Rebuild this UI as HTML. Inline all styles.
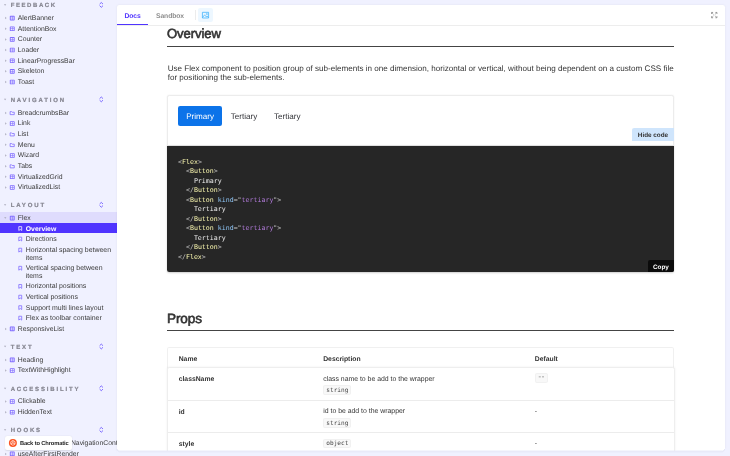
<!DOCTYPE html>
<html lang="en"><head><meta charset="utf-8"><title>Flex - Overview</title><style>
*{box-sizing:border-box;margin:0;padding:0}
html,body{width:730px;height:456px;overflow:hidden;background:#f0f1ff}
body{position:relative;font-family:"Liberation Sans",sans-serif;color:#333;text-rendering:geometricPrecision}
#root{position:absolute;left:-8px;top:-8px;width:746px;height:472px;background:#f0f1ff;will-change:transform;filter:blur(0.3px)}
#in{position:absolute;left:8px;top:8px;width:730px;height:456px}
.ic{position:absolute;display:block;overflow:visible}
#sb{position:absolute;left:0;top:0;width:116.6px;height:464px;overflow:hidden}
.sh,.si,.tab,.p,.bt,.hc,.th,.td,.pt,.bd,.cl{position:absolute;height:10px;line-height:10px;white-space:nowrap}
.sh{font-size:6.0px;font-weight:bold;letter-spacing:1.85px;color:#858590;-webkit-text-stroke:0.2px #858590}
.si{font-size:6.83px;color:#3a3a3a}
.si.sel{color:#fff;font-weight:bold;font-size:6.85px}
.si.st{font-size:6.95px}
#panel{position:absolute;left:116.6px;top:5.07px;width:608.4px;height:446.1px;background:#fff;border-radius:2.2px;box-shadow:0 0.5px 2.5px rgba(0,0,0,.07)}
#tabs{position:absolute;left:116.6px;top:24.7px;width:608.4px;height:0.7px;background:#ededed}
.tab{font-size:6.8px;font-weight:bold;letter-spacing:-0.1px}
.h2{position:absolute;font-size:13.3px;line-height:19px;height:19px;color:#333;white-space:nowrap;-webkit-text-stroke:0.6px #333;letter-spacing:-0.1px;transform:scaleX(0.985);transform-origin:0 0}
.hr{position:absolute;left:167.4px;width:506.6px;height:0.9px;background:#444}
.p{font-size:8.085px;color:#333}
#prev{position:absolute;left:167.4px;top:95.3px;width:506.8px;height:51px;background:#fff;border:0.6px solid #ececec;border-radius:2.2px 2.2px 0 0;box-shadow:0 0.5px 2px rgba(0,0,0,.07)}
#btn{position:absolute;left:177.8px;top:105.9px;width:44.2px;height:20px;border-radius:2.1px;background:#0c73e9}
.bt{font-size:8.1px;color:#323338}
#hide{position:absolute;left:632.1px;top:128.1px;width:41.8px;height:12.8px;background:#cfe5fc;border-radius:2.1px 0 0 0}
.hc{font-size:6.35px;font-weight:bold;color:#333}
#code{position:absolute;left:167.4px;top:146.2px;width:506.8px;height:125.9px;background:#262626;border-radius:0 0 2.2px 2.2px;box-shadow:0 0.5px 2px rgba(0,0,0,.2)}
.cl{font-family:"DejaVu Sans Mono","Liberation Mono",monospace;font-size:6.6px;line-height:9.55px;height:9.55px;color:#ededed;white-space:pre}
.w{color:#c2c2c2}.y{color:#fbf8b0}.b{color:#8ec4f4}.m{color:#b07ad8}
#copy{position:absolute;left:647.7px;top:260.3px;width:26.3px;height:11.8px;background:#0b0b0b;border-radius:2.1px 0 2.1px 0}
#thead{position:absolute;left:167.4px;top:346.9px;width:506.8px;height:24px;border:0.6px solid #f0f0f0;border-bottom:none;border-radius:2.2px 2.2px 0 0}
#tbody{position:absolute;left:167.4px;top:367px;width:507.2px;height:100px;background:#fff;border:0.6px solid #eeeeee;border-radius:2.2px;box-shadow:0 0.5px 2.5px rgba(0,0,0,.07)}
.sep{position:absolute;left:167.7px;width:506.2px;height:0.6px;background:#ececec}
.th{font-size:6.8px;font-weight:bold;color:#333}
.td{font-size:6.9px;color:#333}
.pill{position:absolute;height:9.5px;border:0.5px solid #f1f1f1;background:#f8f8f8;border-radius:1.6px}
.pt{font-family:"DejaVu Sans Mono","Liberation Mono",monospace;font-size:6.1px;color:#444}
#botmask{position:absolute;left:0;top:451.2px;width:730px;height:4.8px;background:#f0f1ff}
#badge{position:absolute;left:5.3px;top:436.1px;width:66.8px;height:14.1px;background:#fff;border-radius:2.1px;box-shadow:0 0.3px 1.5px rgba(0,0,0,.10)}
.bd{font-size:5.75px;font-weight:bold;color:#222;letter-spacing:-0.12px}
</style></head><body>
<div id="root"><div id="in">
<div style="position:absolute;left:-6px;top:212.2px;width:122.6px;height:10.5px;background:#dfdcfd"></div>
<div style="position:absolute;left:-6px;top:222.6px;width:122.6px;height:10.2px;background:#5034ff"></div>
<div id="sb">
<svg class="ic" style="left:2px;top:3px;width:6px;height:5px" viewBox="0 0 6 5"><g transform="translate(1.70 1.00) scale(0.4667 0.5000)"><path d="M0.5 0.5L5.5 0.5L3 3.5z" fill="#a9a9b9"/></g></svg>
<div class="sh" style="left:10.7px;top:1px;letter-spacing:1.58px">FEEDBACK</div>
<svg class="ic" style="left:98px;top:0px;width:7px;height:10px" viewBox="0 0 7 10"><g transform="translate(1.30 1.80) scale(0.5000 0.4429)"><path fill="none" stroke="#6d58ff" stroke-width="1.9" stroke-linecap="round" stroke-linejoin="round" d="M1.2 4.6L4 1.6l2.8 3M1.2 9.4L4 12.4l2.8-3"/></g></svg>
<svg class="ic" style="left:3px;top:15px;width:6px;height:6px" viewBox="0 0 6 6"><g transform="translate(1.80 1.60) scale(0.5500 0.5000)"><path d="M0.5 0.5L3.5 3L0.5 5.5z" fill="#b4b4c4"/></g></svg>
<svg class="ic" style="left:8px;top:14px;width:8px;height:8px" viewBox="0 0 8 8"><g transform="translate(1.80 1.80) scale(0.3500 0.3286)"><path fill="#806cff" fill-rule="evenodd" d="M2 0h10a2 2 0 0 1 2 2v10a2 2 0 0 1-2 2H2a2 2 0 0 1-2-2V2a2 2 0 0 1 2-2zm0.6 2.6v3.6h3.6V2.6zm5.2 0v3.6h3.6V2.6zM2.6 7.8v3.6h3.6V7.8zm5.2 0v3.6h3.6V7.8z"/></g></svg>
<div class="si" style="left:17.8px;top:14px">AlertBanner</div>
<svg class="ic" style="left:3px;top:26px;width:6px;height:6px" viewBox="0 0 6 6"><g transform="translate(1.80 1.25) scale(0.5500 0.5000)"><path d="M0.5 0.5L3.5 3L0.5 5.5z" fill="#b4b4c4"/></g></svg>
<svg class="ic" style="left:8px;top:25px;width:8px;height:8px" viewBox="0 0 8 8"><g transform="translate(1.80 1.45) scale(0.3500 0.3286)"><path fill="#806cff" fill-rule="evenodd" d="M2 0h10a2 2 0 0 1 2 2v10a2 2 0 0 1-2 2H2a2 2 0 0 1-2-2V2a2 2 0 0 1 2-2zm0.6 2.6v3.6h3.6V2.6zm5.2 0v3.6h3.6V2.6zM2.6 7.8v3.6h3.6V7.8zm5.2 0v3.6h3.6V7.8z"/></g></svg>
<div class="si" style="left:17.8px;top:25px">AttentionBox</div>
<svg class="ic" style="left:3px;top:36px;width:6px;height:6px" viewBox="0 0 6 6"><g transform="translate(1.80 1.90) scale(0.5500 0.5000)"><path d="M0.5 0.5L3.5 3L0.5 5.5z" fill="#b4b4c4"/></g></svg>
<svg class="ic" style="left:8px;top:36px;width:8px;height:8px" viewBox="0 0 8 8"><g transform="translate(1.80 1.10) scale(0.3500 0.3286)"><path fill="#806cff" fill-rule="evenodd" d="M2 0h10a2 2 0 0 1 2 2v10a2 2 0 0 1-2 2H2a2 2 0 0 1-2-2V2a2 2 0 0 1 2-2zm0.6 2.6v3.6h3.6V2.6zm5.2 0v3.6h3.6V2.6zM2.6 7.8v3.6h3.6V7.8zm5.2 0v3.6h3.6V7.8z"/></g></svg>
<div class="si" style="left:17.8px;top:35px">Counter</div>
<svg class="ic" style="left:3px;top:47px;width:6px;height:6px" viewBox="0 0 6 6"><g transform="translate(1.80 1.55) scale(0.5500 0.5000)"><path d="M0.5 0.5L3.5 3L0.5 5.5z" fill="#b4b4c4"/></g></svg>
<svg class="ic" style="left:8px;top:46px;width:8px;height:8px" viewBox="0 0 8 8"><g transform="translate(1.80 1.75) scale(0.3500 0.3286)"><path fill="#806cff" fill-rule="evenodd" d="M2 0h10a2 2 0 0 1 2 2v10a2 2 0 0 1-2 2H2a2 2 0 0 1-2-2V2a2 2 0 0 1 2-2zm0.6 2.6v3.6h3.6V2.6zm5.2 0v3.6h3.6V2.6zM2.6 7.8v3.6h3.6V7.8zm5.2 0v3.6h3.6V7.8z"/></g></svg>
<div class="si" style="left:17.8px;top:46px">Loader</div>
<svg class="ic" style="left:3px;top:58px;width:6px;height:6px" viewBox="0 0 6 6"><g transform="translate(1.80 1.20) scale(0.5500 0.5000)"><path d="M0.5 0.5L3.5 3L0.5 5.5z" fill="#b4b4c4"/></g></svg>
<svg class="ic" style="left:8px;top:57px;width:8px;height:8px" viewBox="0 0 8 8"><g transform="translate(1.80 1.40) scale(0.3500 0.3286)"><path fill="#806cff" fill-rule="evenodd" d="M2 0h10a2 2 0 0 1 2 2v10a2 2 0 0 1-2 2H2a2 2 0 0 1-2-2V2a2 2 0 0 1 2-2zm0.6 2.6v3.6h3.6V2.6zm5.2 0v3.6h3.6V2.6zM2.6 7.8v3.6h3.6V7.8zm5.2 0v3.6h3.6V7.8z"/></g></svg>
<div class="si" style="left:17.8px;top:57px">LinearProgressBar</div>
<svg class="ic" style="left:3px;top:68px;width:6px;height:6px" viewBox="0 0 6 6"><g transform="translate(1.80 1.85) scale(0.5500 0.5000)"><path d="M0.5 0.5L3.5 3L0.5 5.5z" fill="#b4b4c4"/></g></svg>
<svg class="ic" style="left:8px;top:68px;width:8px;height:8px" viewBox="0 0 8 8"><g transform="translate(1.80 1.05) scale(0.3500 0.3286)"><path fill="#806cff" fill-rule="evenodd" d="M2 0h10a2 2 0 0 1 2 2v10a2 2 0 0 1-2 2H2a2 2 0 0 1-2-2V2a2 2 0 0 1 2-2zm0.6 2.6v3.6h3.6V2.6zm5.2 0v3.6h3.6V2.6zM2.6 7.8v3.6h3.6V7.8zm5.2 0v3.6h3.6V7.8z"/></g></svg>
<div class="si" style="left:17.8px;top:67px">Skeleton</div>
<svg class="ic" style="left:3px;top:79px;width:6px;height:6px" viewBox="0 0 6 6"><g transform="translate(1.80 1.50) scale(0.5500 0.5000)"><path d="M0.5 0.5L3.5 3L0.5 5.5z" fill="#b4b4c4"/></g></svg>
<svg class="ic" style="left:8px;top:78px;width:8px;height:8px" viewBox="0 0 8 8"><g transform="translate(1.80 1.70) scale(0.3500 0.3286)"><path fill="#806cff" fill-rule="evenodd" d="M2 0h10a2 2 0 0 1 2 2v10a2 2 0 0 1-2 2H2a2 2 0 0 1-2-2V2a2 2 0 0 1 2-2zm0.6 2.6v3.6h3.6V2.6zm5.2 0v3.6h3.6V2.6zM2.6 7.8v3.6h3.6V7.8zm5.2 0v3.6h3.6V7.8z"/></g></svg>
<div class="si" style="left:17.8px;top:78px">Toast</div>
<svg class="ic" style="left:2px;top:97px;width:6px;height:5px" viewBox="0 0 6 5"><g transform="translate(1.70 1.50) scale(0.4667 0.5000)"><path d="M0.5 0.5L5.5 0.5L3 3.5z" fill="#a9a9b9"/></g></svg>
<div class="sh" style="left:10.7px;top:96px">NAVIGATION</div>
<svg class="ic" style="left:98px;top:95px;width:7px;height:10px" viewBox="0 0 7 10"><g transform="translate(1.30 1.30) scale(0.5000 0.4429)"><path fill="none" stroke="#6d58ff" stroke-width="1.9" stroke-linecap="round" stroke-linejoin="round" d="M1.2 4.6L4 1.6l2.8 3M1.2 9.4L4 12.4l2.8-3"/></g></svg>
<svg class="ic" style="left:3px;top:110px;width:6px;height:6px" viewBox="0 0 6 6"><g transform="translate(1.80 1.40) scale(0.5500 0.5000)"><path d="M0.5 0.5L3.5 3L0.5 5.5z" fill="#b4b4c4"/></g></svg>
<svg class="ic" style="left:8px;top:110px;width:8px;height:7px" viewBox="0 0 8 7"><g transform="translate(1.70 1.10) scale(0.3571 0.3636)"><path fill="none" stroke="#806cff" stroke-width="2.2" stroke-linejoin="round" d="M1.2 1.3h4l1.6 1.8h6v6.6H1.2z"/></g></svg>
<div class="si" style="left:17.8px;top:109px">BreadcrumbsBar</div>
<svg class="ic" style="left:3px;top:121px;width:6px;height:6px" viewBox="0 0 6 6"><g transform="translate(1.80 1.05) scale(0.5500 0.5000)"><path d="M0.5 0.5L3.5 3L0.5 5.5z" fill="#b4b4c4"/></g></svg>
<svg class="ic" style="left:8px;top:120px;width:8px;height:8px" viewBox="0 0 8 8"><g transform="translate(1.80 1.25) scale(0.3500 0.3286)"><path fill="#806cff" fill-rule="evenodd" d="M2 0h10a2 2 0 0 1 2 2v10a2 2 0 0 1-2 2H2a2 2 0 0 1-2-2V2a2 2 0 0 1 2-2zm0.6 2.6v3.6h3.6V2.6zm5.2 0v3.6h3.6V2.6zM2.6 7.8v3.6h3.6V7.8zm5.2 0v3.6h3.6V7.8z"/></g></svg>
<div class="si" style="left:17.8px;top:119px">Link</div>
<svg class="ic" style="left:3px;top:131px;width:6px;height:6px" viewBox="0 0 6 6"><g transform="translate(1.80 1.70) scale(0.5500 0.5000)"><path d="M0.5 0.5L3.5 3L0.5 5.5z" fill="#b4b4c4"/></g></svg>
<svg class="ic" style="left:8px;top:131px;width:8px;height:7px" viewBox="0 0 8 7"><g transform="translate(1.70 1.40) scale(0.3571 0.3636)"><path fill="none" stroke="#806cff" stroke-width="2.2" stroke-linejoin="round" d="M1.2 1.3h4l1.6 1.8h6v6.6H1.2z"/></g></svg>
<div class="si" style="left:17.8px;top:130px">List</div>
<svg class="ic" style="left:3px;top:142px;width:6px;height:6px" viewBox="0 0 6 6"><g transform="translate(1.80 1.35) scale(0.5500 0.5000)"><path d="M0.5 0.5L3.5 3L0.5 5.5z" fill="#b4b4c4"/></g></svg>
<svg class="ic" style="left:8px;top:142px;width:8px;height:7px" viewBox="0 0 8 7"><g transform="translate(1.70 1.05) scale(0.3571 0.3636)"><path fill="none" stroke="#806cff" stroke-width="2.2" stroke-linejoin="round" d="M1.2 1.3h4l1.6 1.8h6v6.6H1.2z"/></g></svg>
<div class="si" style="left:17.8px;top:141px">Menu</div>
<svg class="ic" style="left:3px;top:153px;width:6px;height:6px" viewBox="0 0 6 6"><g transform="translate(1.80 1.00) scale(0.5500 0.5000)"><path d="M0.5 0.5L3.5 3L0.5 5.5z" fill="#b4b4c4"/></g></svg>
<svg class="ic" style="left:8px;top:152px;width:8px;height:8px" viewBox="0 0 8 8"><g transform="translate(1.80 1.20) scale(0.3500 0.3286)"><path fill="#806cff" fill-rule="evenodd" d="M2 0h10a2 2 0 0 1 2 2v10a2 2 0 0 1-2 2H2a2 2 0 0 1-2-2V2a2 2 0 0 1 2-2zm0.6 2.6v3.6h3.6V2.6zm5.2 0v3.6h3.6V2.6zM2.6 7.8v3.6h3.6V7.8zm5.2 0v3.6h3.6V7.8z"/></g></svg>
<div class="si" style="left:17.8px;top:151px">Wizard</div>
<svg class="ic" style="left:3px;top:163px;width:6px;height:6px" viewBox="0 0 6 6"><g transform="translate(1.80 1.65) scale(0.5500 0.5000)"><path d="M0.5 0.5L3.5 3L0.5 5.5z" fill="#b4b4c4"/></g></svg>
<svg class="ic" style="left:8px;top:163px;width:8px;height:7px" viewBox="0 0 8 7"><g transform="translate(1.70 1.35) scale(0.3571 0.3636)"><path fill="none" stroke="#806cff" stroke-width="2.2" stroke-linejoin="round" d="M1.2 1.3h4l1.6 1.8h6v6.6H1.2z"/></g></svg>
<div class="si" style="left:17.8px;top:162px">Tabs</div>
<svg class="ic" style="left:3px;top:174px;width:6px;height:6px" viewBox="0 0 6 6"><g transform="translate(1.80 1.30) scale(0.5500 0.5000)"><path d="M0.5 0.5L3.5 3L0.5 5.5z" fill="#b4b4c4"/></g></svg>
<svg class="ic" style="left:8px;top:173px;width:8px;height:8px" viewBox="0 0 8 8"><g transform="translate(1.80 1.50) scale(0.3500 0.3286)"><path fill="#806cff" fill-rule="evenodd" d="M2 0h10a2 2 0 0 1 2 2v10a2 2 0 0 1-2 2H2a2 2 0 0 1-2-2V2a2 2 0 0 1 2-2zm0.6 2.6v3.6h3.6V2.6zm5.2 0v3.6h3.6V2.6zM2.6 7.8v3.6h3.6V7.8zm5.2 0v3.6h3.6V7.8z"/></g></svg>
<div class="si" style="left:17.8px;top:173px">VirtualizedGrid</div>
<svg class="ic" style="left:3px;top:184px;width:6px;height:6px" viewBox="0 0 6 6"><g transform="translate(1.80 1.95) scale(0.5500 0.5000)"><path d="M0.5 0.5L3.5 3L0.5 5.5z" fill="#b4b4c4"/></g></svg>
<svg class="ic" style="left:8px;top:184px;width:8px;height:8px" viewBox="0 0 8 8"><g transform="translate(1.80 1.15) scale(0.3500 0.3286)"><path fill="#806cff" fill-rule="evenodd" d="M2 0h10a2 2 0 0 1 2 2v10a2 2 0 0 1-2 2H2a2 2 0 0 1-2-2V2a2 2 0 0 1 2-2zm0.6 2.6v3.6h3.6V2.6zm5.2 0v3.6h3.6V2.6zM2.6 7.8v3.6h3.6V7.8zm5.2 0v3.6h3.6V7.8z"/></g></svg>
<div class="si" style="left:17.8px;top:183px">VirtualizedList</div>
<svg class="ic" style="left:2px;top:202px;width:6px;height:5px" viewBox="0 0 6 5"><g transform="translate(1.70 1.90) scale(0.4667 0.5000)"><path d="M0.5 0.5L5.5 0.5L3 3.5z" fill="#a9a9b9"/></g></svg>
<div class="sh" style="left:10.7px;top:201px">LAYOUT</div>
<svg class="ic" style="left:98px;top:200px;width:7px;height:10px" viewBox="0 0 7 10"><g transform="translate(1.30 1.70) scale(0.5000 0.4429)"><path fill="none" stroke="#6d58ff" stroke-width="1.9" stroke-linecap="round" stroke-linejoin="round" d="M1.2 4.6L4 1.6l2.8 3M1.2 9.4L4 12.4l2.8-3"/></g></svg>
<svg class="ic" style="left:2px;top:216px;width:6px;height:5px" viewBox="0 0 6 5"><g transform="translate(1.90 1.10) scale(0.4667 0.5000)"><path d="M0.5 0.5L5.5 0.5L3 3.5z" fill="#a9a9b9"/></g></svg>
<svg class="ic" style="left:8px;top:214px;width:8px;height:8px" viewBox="0 0 8 8"><g transform="translate(1.80 1.80) scale(0.3500 0.3286)"><path fill="#806cff" fill-rule="evenodd" d="M2 0h10a2 2 0 0 1 2 2v10a2 2 0 0 1-2 2H2a2 2 0 0 1-2-2V2a2 2 0 0 1 2-2zm0.6 2.6v3.6h3.6V2.6zm5.2 0v3.6h3.6V2.6zM2.6 7.8v3.6h3.6V7.8zm5.2 0v3.6h3.6V7.8z"/></g></svg>
<div class="si" style="left:17.8px;top:214px">Flex</div>
<svg class="ic" style="left:17px;top:225px;width:7px;height:8px" viewBox="0 0 7 8"><g transform="translate(1.30 1.15) scale(0.3900 0.3769)"><path fill="none" stroke="#f1eeff" stroke-width="2.1" stroke-linejoin="round" d="M1.3 1.3h7.4v10.2L5 8.6l-3.7 2.9z"/></g></svg>
<div class="si sel" style="left:25.8px;top:225px">Overview</div>
<svg class="ic" style="left:17px;top:235px;width:7px;height:8px" viewBox="0 0 7 8"><g transform="translate(1.30 1.65) scale(0.3900 0.3769)"><path fill="none" stroke="#806cff" stroke-width="2.1" stroke-linejoin="round" d="M1.3 1.3h7.4v10.2L5 8.6l-3.7 2.9z"/></g></svg>
<div class="si st" style="left:25.8px;top:235px">Directions</div>
<svg class="ic" style="left:17px;top:246px;width:7px;height:8px" viewBox="0 0 7 8"><g transform="translate(1.30 1.75) scale(0.3900 0.3769)"><path fill="none" stroke="#806cff" stroke-width="2.1" stroke-linejoin="round" d="M1.3 1.3h7.4v10.2L5 8.6l-3.7 2.9z"/></g></svg>
<div class="si st" style="left:25.8px;top:246px">Horizontal spacing between</div>
<div class="si st" style="left:25.8px;top:254px">items</div>
<svg class="ic" style="left:17px;top:264px;width:7px;height:8px" viewBox="0 0 7 8"><g transform="translate(1.30 1.85) scale(0.3900 0.3769)"><path fill="none" stroke="#806cff" stroke-width="2.1" stroke-linejoin="round" d="M1.3 1.3h7.4v10.2L5 8.6l-3.7 2.9z"/></g></svg>
<div class="si st" style="left:25.8px;top:264px">Vertical spacing between</div>
<div class="si st" style="left:25.8px;top:272px">items</div>
<svg class="ic" style="left:17px;top:283px;width:7px;height:8px" viewBox="0 0 7 8"><g transform="translate(1.30 1.05) scale(0.3900 0.3769)"><path fill="none" stroke="#806cff" stroke-width="2.1" stroke-linejoin="round" d="M1.3 1.3h7.4v10.2L5 8.6l-3.7 2.9z"/></g></svg>
<div class="si st" style="left:25.8px;top:282px">Horizontal positions</div>
<svg class="ic" style="left:17px;top:293px;width:7px;height:8px" viewBox="0 0 7 8"><g transform="translate(1.30 1.75) scale(0.3900 0.3769)"><path fill="none" stroke="#806cff" stroke-width="2.1" stroke-linejoin="round" d="M1.3 1.3h7.4v10.2L5 8.6l-3.7 2.9z"/></g></svg>
<div class="si st" style="left:25.8px;top:293px">Vertical positions</div>
<svg class="ic" style="left:17px;top:304px;width:7px;height:8px" viewBox="0 0 7 8"><g transform="translate(1.30 1.25) scale(0.3900 0.3769)"><path fill="none" stroke="#806cff" stroke-width="2.1" stroke-linejoin="round" d="M1.3 1.3h7.4v10.2L5 8.6l-3.7 2.9z"/></g></svg>
<div class="si st" style="left:25.8px;top:304px">Support multi lines layout</div>
<svg class="ic" style="left:17px;top:314px;width:7px;height:8px" viewBox="0 0 7 8"><g transform="translate(1.30 1.75) scale(0.3900 0.3769)"><path fill="none" stroke="#806cff" stroke-width="2.1" stroke-linejoin="round" d="M1.3 1.3h7.4v10.2L5 8.6l-3.7 2.9z"/></g></svg>
<div class="si st" style="left:25.8px;top:314px">Flex as toolbar container</div>
<svg class="ic" style="left:3px;top:326px;width:6px;height:6px" viewBox="0 0 6 6"><g transform="translate(1.80 1.40) scale(0.5500 0.5000)"><path d="M0.5 0.5L3.5 3L0.5 5.5z" fill="#b4b4c4"/></g></svg>
<svg class="ic" style="left:8px;top:325px;width:8px;height:8px" viewBox="0 0 8 8"><g transform="translate(1.80 1.60) scale(0.3500 0.3286)"><path fill="#806cff" fill-rule="evenodd" d="M2 0h10a2 2 0 0 1 2 2v10a2 2 0 0 1-2 2H2a2 2 0 0 1-2-2V2a2 2 0 0 1 2-2zm0.6 2.6v3.6h3.6V2.6zm5.2 0v3.6h3.6V2.6zM2.6 7.8v3.6h3.6V7.8zm5.2 0v3.6h3.6V7.8z"/></g></svg>
<div class="si" style="left:17.8px;top:325px">ResponsiveList</div>
<svg class="ic" style="left:2px;top:344px;width:6px;height:5px" viewBox="0 0 6 5"><g transform="translate(1.70 1.60) scale(0.4667 0.5000)"><path d="M0.5 0.5L5.5 0.5L3 3.5z" fill="#a9a9b9"/></g></svg>
<div class="sh" style="left:10.7px;top:343px">TEXT</div>
<svg class="ic" style="left:98px;top:342px;width:7px;height:10px" viewBox="0 0 7 10"><g transform="translate(1.30 1.40) scale(0.5000 0.4429)"><path fill="none" stroke="#6d58ff" stroke-width="1.9" stroke-linecap="round" stroke-linejoin="round" d="M1.2 4.6L4 1.6l2.8 3M1.2 9.4L4 12.4l2.8-3"/></g></svg>
<svg class="ic" style="left:3px;top:357px;width:6px;height:6px" viewBox="0 0 6 6"><g transform="translate(1.80 1.40) scale(0.5500 0.5000)"><path d="M0.5 0.5L3.5 3L0.5 5.5z" fill="#b4b4c4"/></g></svg>
<svg class="ic" style="left:8px;top:356px;width:8px;height:8px" viewBox="0 0 8 8"><g transform="translate(1.80 1.60) scale(0.3500 0.3286)"><path fill="#806cff" fill-rule="evenodd" d="M2 0h10a2 2 0 0 1 2 2v10a2 2 0 0 1-2 2H2a2 2 0 0 1-2-2V2a2 2 0 0 1 2-2zm0.6 2.6v3.6h3.6V2.6zm5.2 0v3.6h3.6V2.6zM2.6 7.8v3.6h3.6V7.8zm5.2 0v3.6h3.6V7.8z"/></g></svg>
<div class="si" style="left:17.8px;top:356px">Heading</div>
<svg class="ic" style="left:3px;top:368px;width:6px;height:6px" viewBox="0 0 6 6"><g transform="translate(1.80 1.00) scale(0.5500 0.5000)"><path d="M0.5 0.5L3.5 3L0.5 5.5z" fill="#b4b4c4"/></g></svg>
<svg class="ic" style="left:8px;top:367px;width:8px;height:8px" viewBox="0 0 8 8"><g transform="translate(1.80 1.20) scale(0.3500 0.3286)"><path fill="#806cff" fill-rule="evenodd" d="M2 0h10a2 2 0 0 1 2 2v10a2 2 0 0 1-2 2H2a2 2 0 0 1-2-2V2a2 2 0 0 1 2-2zm0.6 2.6v3.6h3.6V2.6zm5.2 0v3.6h3.6V2.6zM2.6 7.8v3.6h3.6V7.8zm5.2 0v3.6h3.6V7.8z"/></g></svg>
<div class="si" style="left:17.8px;top:366px">TextWithHighlight</div>
<svg class="ic" style="left:2px;top:386px;width:6px;height:5px" viewBox="0 0 6 5"><g transform="translate(1.70 1.40) scale(0.4667 0.5000)"><path d="M0.5 0.5L5.5 0.5L3 3.5z" fill="#a9a9b9"/></g></svg>
<div class="sh" style="left:10.7px;top:385px">ACCESSIBILITY</div>
<svg class="ic" style="left:98px;top:384px;width:7px;height:10px" viewBox="0 0 7 10"><g transform="translate(1.30 1.20) scale(0.5000 0.4429)"><path fill="none" stroke="#6d58ff" stroke-width="1.9" stroke-linecap="round" stroke-linejoin="round" d="M1.2 4.6L4 1.6l2.8 3M1.2 9.4L4 12.4l2.8-3"/></g></svg>
<svg class="ic" style="left:3px;top:399px;width:6px;height:6px" viewBox="0 0 6 6"><g transform="translate(1.80 1.00) scale(0.5500 0.5000)"><path d="M0.5 0.5L3.5 3L0.5 5.5z" fill="#b4b4c4"/></g></svg>
<svg class="ic" style="left:8px;top:398px;width:8px;height:8px" viewBox="0 0 8 8"><g transform="translate(1.80 1.20) scale(0.3500 0.3286)"><path fill="#806cff" fill-rule="evenodd" d="M2 0h10a2 2 0 0 1 2 2v10a2 2 0 0 1-2 2H2a2 2 0 0 1-2-2V2a2 2 0 0 1 2-2zm0.6 2.6v3.6h3.6V2.6zm5.2 0v3.6h3.6V2.6zM2.6 7.8v3.6h3.6V7.8zm5.2 0v3.6h3.6V7.8z"/></g></svg>
<div class="si" style="left:17.8px;top:397px">Clickable</div>
<svg class="ic" style="left:3px;top:409px;width:6px;height:6px" viewBox="0 0 6 6"><g transform="translate(1.80 1.70) scale(0.5500 0.5000)"><path d="M0.5 0.5L3.5 3L0.5 5.5z" fill="#b4b4c4"/></g></svg>
<svg class="ic" style="left:8px;top:408px;width:8px;height:8px" viewBox="0 0 8 8"><g transform="translate(1.80 1.90) scale(0.3500 0.3286)"><path fill="#806cff" fill-rule="evenodd" d="M2 0h10a2 2 0 0 1 2 2v10a2 2 0 0 1-2 2H2a2 2 0 0 1-2-2V2a2 2 0 0 1 2-2zm0.6 2.6v3.6h3.6V2.6zm5.2 0v3.6h3.6V2.6zM2.6 7.8v3.6h3.6V7.8zm5.2 0v3.6h3.6V7.8z"/></g></svg>
<div class="si" style="left:17.8px;top:408px">HiddenText</div>
<svg class="ic" style="left:2px;top:427px;width:6px;height:5px" viewBox="0 0 6 5"><g transform="translate(1.70 1.90) scale(0.4667 0.5000)"><path d="M0.5 0.5L5.5 0.5L3 3.5z" fill="#a9a9b9"/></g></svg>
<div class="sh" style="left:10.7px;top:426px">HOOKS</div>
<svg class="ic" style="left:98px;top:425px;width:7px;height:10px" viewBox="0 0 7 10"><g transform="translate(1.30 1.70) scale(0.5000 0.4429)"><path fill="none" stroke="#6d58ff" stroke-width="1.9" stroke-linecap="round" stroke-linejoin="round" d="M1.2 4.6L4 1.6l2.8 3M1.2 9.4L4 12.4l2.8-3"/></g></svg>
<svg class="ic" style="left:3px;top:440px;width:6px;height:6px" viewBox="0 0 6 6"><g transform="translate(1.80 1.70) scale(0.5500 0.5000)"><path d="M0.5 0.5L3.5 3L0.5 5.5z" fill="#b4b4c4"/></g></svg>
<svg class="ic" style="left:8px;top:439px;width:8px;height:8px" viewBox="0 0 8 8"><g transform="translate(1.80 1.90) scale(0.3500 0.3286)"><path fill="#806cff" fill-rule="evenodd" d="M2 0h10a2 2 0 0 1 2 2v10a2 2 0 0 1-2 2H2a2 2 0 0 1-2-2V2a2 2 0 0 1 2-2zm0.6 2.6v3.6h3.6V2.6zm5.2 0v3.6h3.6V2.6zM2.6 7.8v3.6h3.6V7.8zm5.2 0v3.6h3.6V7.8z"/></g></svg>
<div class="si" style="left:17.8px;top:439px">useGridKeyboardNavigationContext</div>
<svg class="ic" style="left:3px;top:451px;width:6px;height:6px" viewBox="0 0 6 6"><g transform="translate(1.80 1.40) scale(0.5500 0.5000)"><path d="M0.5 0.5L3.5 3L0.5 5.5z" fill="#b4b4c4"/></g></svg>
<svg class="ic" style="left:8px;top:450px;width:8px;height:8px" viewBox="0 0 8 8"><g transform="translate(1.80 1.60) scale(0.3500 0.3286)"><path fill="#806cff" fill-rule="evenodd" d="M2 0h10a2 2 0 0 1 2 2v10a2 2 0 0 1-2 2H2a2 2 0 0 1-2-2V2a2 2 0 0 1 2-2zm0.6 2.6v3.6h3.6V2.6zm5.2 0v3.6h3.6V2.6zM2.6 7.8v3.6h3.6V7.8zm5.2 0v3.6h3.6V7.8z"/></g></svg>
<div class="si" style="left:17.8px;top:450px">useAfterFirstRender</div>
</div>
<div id="panel"></div>
<div id="tabs"></div>
<div class="tab" style="left:124.5px;top:12px;color:#5034ff">Docs</div>
<div style="position:absolute;left:116.6px;top:23.6px;width:31.5px;height:1.5px;background:#5034ff"></div>
<div class="tab" style="left:156.0px;top:12px;color:#8f8f8f">Sandbox</div>
<div style="position:absolute;left:195.0px;top:10.0px;width:0.6px;height:10.1px;background:#ececec"></div>
<div style="position:absolute;left:198.4px;top:8.0px;width:14.3px;height:14.0px;background:#edf7ff;border-radius:2.1px"></div>
<svg class="ic" style="left:200px;top:10px;width:11px;height:10px" viewBox="0 0 11 10"><g transform="translate(1.90 1.80) scale(0.5143 0.5154)"><path fill="none" stroke="#3fb2fc" stroke-width="1.5" stroke-linejoin="round" d="M1 1h12v11H1z"/><circle cx="9.6" cy="4.4" r="1.3" fill="none" stroke="#3fb2fc" stroke-width="1.1"/><path fill="none" stroke="#3fb2fc" stroke-width="1.4" stroke-linejoin="round" d="M1.3 11.2L5.2 5.8l3.2 4 1.7-1.6 2.6 3"/></g></svg>
<svg class="ic" style="left:710px;top:11px;width:10px;height:10px" viewBox="0 0 10 10"><g transform="translate(1.10 1.00) scale(0.4500 0.4429)"><path fill="none" stroke="#868686" stroke-width="1.9" d="M1 4.4V1h3.4M9.6 1H13v3.4M13 9.6V13H9.600M4.400 13H1V9.600"/><path fill="none" stroke="#939393" stroke-width="1.5" d="M1.300 1.300l4.400 4.400M12.700 1.300L8.300 5.700M12.700 12.700L8.300 8.300M1.300 12.700l4.400-4.400"/></g></svg>
<div class="h2" style="left:167.4px;top:24px">Overview</div>
<div class="hr" style="top:45.9px"></div>
<div class="p" style="left:167.7px;top:64px">Use Flex component to position group of sub-elements in one dimension, horizontal or vertical, without being dependent on a custom CSS file</div>
<div class="p" style="left:167.7px;top:73px">for positioning the sub-elements.</div>
<div id="prev"></div>
<div id="btn"></div>
<div class="bt" style="left:186.2px;top:112px;color:#fff">Primary</div>
<div class="bt" style="left:230.7px;top:112px">Tertiary</div>
<div class="bt" style="left:274.0px;top:112px">Tertiary</div>
<div id="hide"></div>
<div class="hc" style="left:637.8px;top:131px">Hide code</div>
<div id="code">
</div>
<div class="cl" style="left:178.0px;top:158px"><span class="w">&lt;</span><span class="y">Flex</span><span class="w">&gt;</span></div>
<div class="cl" style="left:178.0px;top:167px">  <span class="w">&lt;</span><span class="y">Button</span><span class="w">&gt;</span></div>
<div class="cl" style="left:178.0px;top:177px">    Primary</div>
<div class="cl" style="left:178.0px;top:186px">  <span class="w">&lt;/</span><span class="y">Button</span><span class="w">&gt;</span></div>
<div class="cl" style="left:178.0px;top:196px">  <span class="w">&lt;</span><span class="y">Button</span> <span class="b">kind</span><span class="w">=&quot;</span><span class="m">tertiary</span><span class="w">&quot;&gt;</span></div>
<div class="cl" style="left:178.0px;top:205px">    Tertiary</div>
<div class="cl" style="left:178.0px;top:215px">  <span class="w">&lt;/</span><span class="y">Button</span><span class="w">&gt;</span></div>
<div class="cl" style="left:178.0px;top:224px">  <span class="w">&lt;</span><span class="y">Button</span> <span class="b">kind</span><span class="w">=&quot;</span><span class="m">tertiary</span><span class="w">&quot;&gt;</span></div>
<div class="cl" style="left:178.0px;top:234px">    Tertiary</div>
<div class="cl" style="left:178.0px;top:243px">  <span class="w">&lt;/</span><span class="y">Button</span><span class="w">&gt;</span></div>
<div class="cl" style="left:178.0px;top:253px"><span class="w">&lt;/</span><span class="y">Flex</span><span class="w">&gt;</span></div>
<div id="copy"></div>
<div class="hc" style="left:653.0px;top:263px;color:#fff">Copy</div>
<div class="h2" style="left:167.3px;top:309px;transform:scaleX(1.02)">Props</div>
<div class="hr" style="top:330.1px"></div>
<div id="thead"></div>
<div id="tbody"></div>
<div class="sep" style="top:400.0px"></div>
<div class="sep" style="top:432.0px"></div>
<div class="th" style="left:178.7px;top:355px">Name</div>
<div class="th" style="left:323.2px;top:355px">Description</div>
<div class="th" style="left:534.8px;top:355px">Default</div>
<div class="th" style="left:178.7px;top:375px">className</div>
<div class="th" style="left:178.7px;top:408px">id</div>
<div class="th" style="left:178.7px;top:440px">style</div>
<div class="td" style="left:323.2px;top:375px">class name to be add to the wrapper</div>
<div class="pill" style="left:323.1px;top:385.2px;width:28.1px"></div>
<div class="pt" style="left:326.3px;top:386px">string</div>
<div class="td" style="left:323.2px;top:407px">id to be add to the wrapper</div>
<div class="pill" style="left:323.1px;top:418.0px;width:28.1px"></div>
<div class="pt" style="left:326.3px;top:419px">string</div>
<div class="pill" style="left:323.1px;top:438.5px;width:28.1px"></div>
<div class="pt" style="left:326.3px;top:439px">object</div>
<div class="pill" style="left:534.6px;top:373.1px;width:13.2px;height:9.7px"></div>
<div class="pt" style="left:537.9px;top:374px;color:#888;font-size:5.4px">&quot;&quot;</div>
<div class="td" style="left:534.8px;top:407px">-</div>
<div class="td" style="left:534.8px;top:439px">-</div>
<svg class="ic" style="left:117px;top:448px;width:613px;height:8px" viewBox="0.4 -0.45 613 8"><path fill="#f0f1ff" d="M0 0A2.2 2.2 0 0 0 2.2 2.2H606.2A2.2 2.2 0 0 0 608.4 0H613.4V8H0z"/><path fill="none" stroke="#e2e3f4" stroke-width="0.9" d="M0.3 0.6A2.2 2.2 0 0 0 2.2 2.75H606.2A2.2 2.2 0 0 0 608.1 0.6"/><path fill="none" stroke="#eaebfa" stroke-width="0.9" d="M2.2 3.6H606.2"/></svg>
<div id="badge"></div>
<svg class="ic" style="left:7px;top:437px;width:11px;height:11px" viewBox="0 0 11 11"><g transform="translate(1.90 1.90) scale(0.5000 0.5000)"><circle cx="8" cy="8" r="8" fill="#fc521f"/><path fill="none" stroke="#fff" stroke-width="1.3" stroke-linejoin="round" d="M8 3.2l4.2 2.4v4.8L8 12.8 3.8 10.4V5.6zM8 3.2v4.8M3.8 10.4L8 8l4.2 2.4"/></g></svg>
<div class="bd" style="left:19.9px;top:439px">Back to Chromatic</div>
</div></div>
</body></html>
